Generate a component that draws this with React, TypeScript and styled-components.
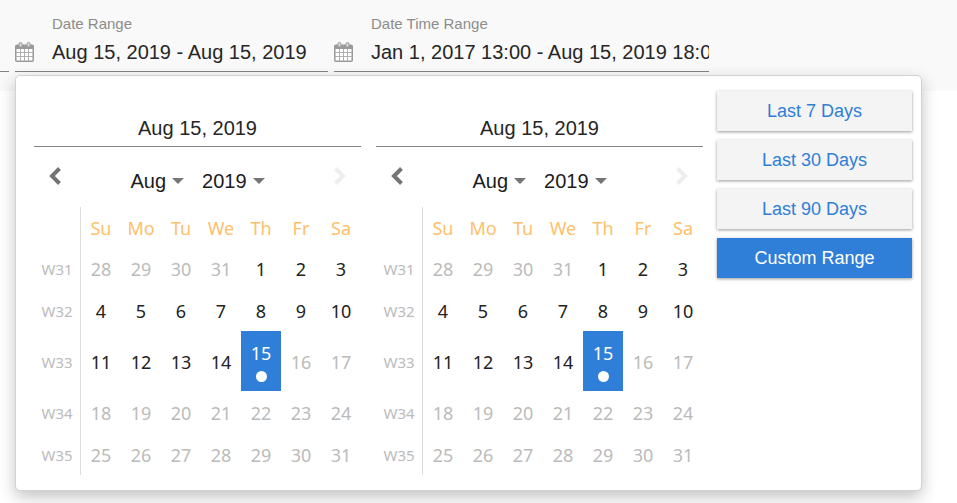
import React, { useState } from "react";
import styled, { createGlobalStyle } from "styled-components";

const GlobalStyle = createGlobalStyle`
  * { box-sizing: border-box; }
  body {
    margin: 0;
    background: #ffffff;
    color: #262626;
    font-family: "Liberation Sans", Arial, sans-serif;
    font-size: 20px;
  }
  button, input, select { font-family: inherit; }
`;

const Page = styled.main`
  min-height: 100vh;
`;

const FilterBar = styled.section`
  display: grid;
  grid-template-columns: 9px minmax(0, 313fr) minmax(0, 375fr);
  column-gap: 6px;
  padding: 14px 248px 19px 0;
  background: #f9f9f9;
`;

const Field = styled.div`
  display: flex;
  flex-direction: column;
  border-bottom: 1px solid #858585;
`;

const FieldLabel = styled.label`
  padding-left: 37px;
  color: #8c8c8c;
  font-size: 15px;
  line-height: 20px;
`;

const FieldRow = styled.div`
  display: flex;
  align-items: center;
  height: 37px;
  padding-bottom: 1px;
`;

const FieldInput = styled.input`
  flex: 1;
  min-width: 0;
  height: 36px;
  margin-left: 18px;
  padding: 0;
  border: 0;
  outline: 0;
  background: transparent;
  color: #262626;
  font-size: 20px;
`;

const Popup = styled.section`
  position: relative;
  display: flex;
  gap: 14px;
  margin: -16px 35px 0 15px;
  padding: 15px 9px 15px 18px;
  border: 1px solid #d2d2d2;
  border-radius: 5px;
  background: #ffffff;
  box-shadow: 0 6px 16px rgba(0, 0, 0, 0.24);
`;

const Calendars = styled.div`
  flex: 1;
  display: flex;
  gap: 15px;
  padding-top: 19px;
`;

const CalendarBox = styled.div`
  flex: 1;
  min-width: 0;
`;

const DateInput = styled.input`
  display: block;
  width: 100%;
  height: 37px;
  padding: 0;
  border: 0;
  border-bottom: 1px solid #858585;
  outline: 0;
  background: transparent;
  color: #262626;
  font-size: 20px;
  text-align: center;
`;

const Nav = styled.div`
  display: flex;
  align-items: center;
  justify-content: space-between;
  height: 60px;
  padding: 0 15px 2px;
`;

const NavButton = styled.button`
  display: flex;
  padding: 0;
  border: 0;
  background: transparent;
  color: #757575;
  &:disabled { color: #eeeeee; }
`;

const Selects = styled.div`
  display: flex;
  gap: 18px;
  padding-top: 10px;
`;

const SelectBox = styled.span`
  display: flex;
  align-items: center;
  gap: 6px;
  color: #757575;
`;

const Select = styled.select`
  appearance: none;
  field-sizing: content;
  height: 28px;
  padding: 0;
  border: 0;
  outline: 0;
  background: transparent;
  color: #1c1c1c;
  font-size: 20px;
`;

const MonthTable = styled.table`
  width: 100%;
  table-layout: fixed;
  border-collapse: separate;
  border-spacing: 0;
  font-family: "Noto Sans", "Open Sans", sans-serif;
  font-size: 18px;
  line-height: 24px;
  text-align: center;
  th, td { padding: 0; font-weight: 400; }
  th { padding-top: 2px; }
`;

const WeekCell = styled.th`
  width: 47px;
  border-right: 1px solid #dcdcdc;
  color: #bbbbbb;
  font-size: 15px;
`;

const DayName = styled.th`
  height: 40px;
  color: #ffc06c;
`;

const Day = styled.button<{ $selected: boolean }>`
  display: flex;
  flex-direction: column;
  align-items: center;
  justify-content: center;
  gap: 6px;
  width: 100%;
  height: ${(p) => (p.$selected ? 60 : 42)}px;
  padding: ${(p) => (p.$selected ? 0 : 2)}px 0 0;
  border: 0;
  background: ${(p) => (p.$selected ? "#2f7ed8" : "transparent")};
  color: ${(p) => (p.$selected ? "#ffffff" : "#222222")};
  font-size: 18px;
  line-height: 24px;
  &:disabled { color: #bbbbbb; }
`;

const Dot = styled.span`
  width: 11px;
  height: 11px;
  border-radius: 50%;
  background: #ffffff;
`;

const Presets = styled.div`
  display: flex;
  flex-direction: column;
  gap: 9px;
  width: 195px;
`;

const Preset = styled.button<{ $active: boolean }>`
  height: 40px;
  padding: 0;
  border: 0;
  background: ${(p) => (p.$active ? "#2f7ed8" : "#f4f4f4")};
  color: ${(p) => (p.$active ? "#ffffff" : "#2f7ed8")};
  box-shadow: 0 1px 3px rgba(0, 0, 0, 0.4);
  font-size: 18px;
`;

const CalendarIcon = () => (
  <svg width="19" height="20" viewBox="0 0 19 20" fill="none" stroke="#9a9a9a" aria-hidden="true">
    <rect x="0.75" y="3.25" width="17.5" height="16" rx="1" fill="#ffffff" strokeWidth="1.5" />
    <path d="M1 3h17v4H1z" fill="#9a9a9a" stroke="none" />
    <path d="M5.5 7v12M9.5 7v12M13.5 7v12M1 10.5h17M1 14.5h17" stroke="#b0b0b0" />
    <rect x="4" y="0.5" width="3" height="4.5" rx="1.5" fill="#dddddd" />
    <rect x="12" y="0.5" width="3" height="4.5" rx="1.5" fill="#dddddd" />
  </svg>
);

const Chevron = ({ next = false }: { next?: boolean }) => (
  <svg width="12" height="18" viewBox="0 0 12 18" fill="none" stroke="currentColor" strokeWidth="4" aria-hidden="true">
    <path d={next ? "M1.5 1.5 9 9l-7.5 7.5" : "M10.5 1.5 3 9l7.5 7.5"} />
  </svg>
);

const Caret = () => (
  <svg width="12" height="6" viewBox="0 0 12 6" fill="currentColor" aria-hidden="true">
    <path d="M0 0h12L6 6z" />
  </svg>
);

const DAY_NAMES = ["Su", "Mo", "Tu", "We", "Th", "Fr", "Sa"];
const MONTHS = ["Jan", "Feb", "Mar", "Apr", "May", "Jun", "Jul", "Aug", "Sep", "Oct", "Nov", "Dec"];
const YEARS = ["2017", "2018", "2019"];
const WEEKS = [
  { week: "W31", days: [28, 29, 30, 31, 1, 2, 3] },
  { week: "W32", days: [4, 5, 6, 7, 8, 9, 10] },
  { week: "W33", days: [11, 12, 13, 14, 15, 16, 17] },
  { week: "W34", days: [18, 19, 20, 21, 22, 23, 24] },
  { week: "W35", days: [25, 26, 27, 28, 29, 30, 31] },
];
const PRESETS = ["Last 7 Days", "Last 30 Days", "Last 90 Days", "Custom Range"];

function RangeField({ id, label, value }: { id: string; label: string; value: string }) {
  return (
    <Field>
      <FieldLabel htmlFor={id}>{label}</FieldLabel>
      <FieldRow>
        <CalendarIcon />
        <FieldInput id={id} defaultValue={value} />
      </FieldRow>
    </Field>
  );
}

function Calendar({ name }: { name: string }) {
  const [selected, setSelected] = useState(15);
  return (
    <CalendarBox>
      <DateInput aria-label={`${name} date`} defaultValue="Aug 15, 2019" />
      <Nav>
        <NavButton type="button" aria-label="Previous month"><Chevron /></NavButton>
        <Selects>
          <SelectBox>
            <Select aria-label={`${name} month`} defaultValue="Aug">
              {MONTHS.map((m) => <option key={m}>{m}</option>)}
            </Select>
            <Caret />
          </SelectBox>
          <SelectBox>
            <Select aria-label={`${name} year`} defaultValue="2019">
              {YEARS.map((y) => <option key={y}>{y}</option>)}
            </Select>
            <Caret />
          </SelectBox>
        </Selects>
        <NavButton type="button" aria-label="Next month" disabled><Chevron next /></NavButton>
      </Nav>
      <MonthTable>
        <thead>
          <tr>
            <WeekCell />
            {DAY_NAMES.map((d) => <DayName key={d} scope="col">{d}</DayName>)}
          </tr>
        </thead>
        <tbody>
          {WEEKS.map(({ week, days }, row) => (
            <tr key={week}>
              <WeekCell scope="row">{week}</WeekCell>
              {days.map((day) => {
                const outside = row === 0 && day > 7;
                const isSelected = !outside && day === selected;
                return (
                  <td key={day}>
                    <Day
                      type="button"
                      $selected={isSelected}
                      disabled={outside || day > 15}
                      onClick={() => setSelected(day)}
                    >
                      {day}
                      {isSelected && <Dot />}
                    </Day>
                  </td>
                );
              })}
            </tr>
          ))}
        </tbody>
      </MonthTable>
    </CalendarBox>
  );
}

export default function App() {
  const [preset, setPreset] = useState("Custom Range");
  return (
    <Page>
      <GlobalStyle />
      <FilterBar>
        <Field />
        <RangeField id="date-range" label="Date Range" value="Aug 15, 2019 - Aug 15, 2019" />
        <RangeField id="date-time-range" label="Date Time Range" value="Jan 1, 2017 13:00 - Aug 15, 2019 18:00" />
      </FilterBar>
      <Popup aria-label="Choose a date range">
        <Calendars>
          <Calendar name="Start" />
          <Calendar name="End" />
        </Calendars>
        <Presets>
          {PRESETS.map((p) => (
            <Preset key={p} type="button" $active={p === preset} onClick={() => setPreset(p)}>
              {p}
            </Preset>
          ))}
        </Presets>
      </Popup>
    </Page>
  );
}
